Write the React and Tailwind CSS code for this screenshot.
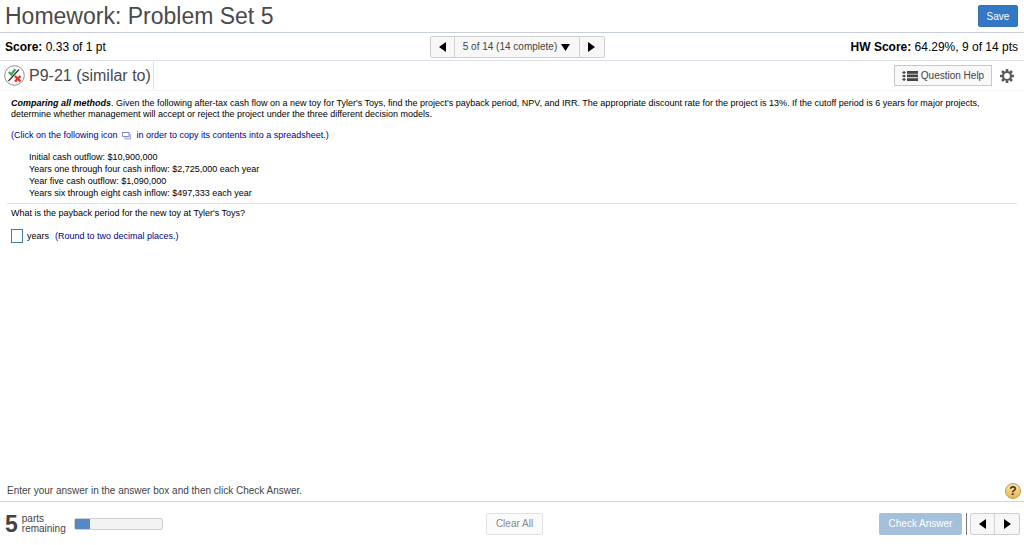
import React from "react";

function Triangle({ dir }) {
  const d = {
    left: "M8 0v10L1 5z",
    right: "M1 0v10l7-5z",
    down: "M0 2h9L4.500 9z",
  }[dir];
  return (
    <svg width="9" height="10" viewBox="0 0 9 10" fill="#000" aria-hidden="true">
      <path d={d} />
    </svg>
  );
}

function PartialCreditIcon() {
  return (
    <svg className="shrink-0" width="21" height="22" viewBox="0 0 21 22" fill="none" aria-hidden="true">
      <circle cx="10.500" cy="10.500" r="9.800" fill="#fff" stroke="#8c8c8c" />
      <path d="M4.500 16L15 4.500" stroke="#333" strokeWidth="1.300" />
      <path d="M4.800 7l2.500 2.500L11.300 4.300" stroke="#3fa65a" strokeWidth="2.400" />
      <path d="M11 11l5.500 5.500M16.500 11L11 16.500" stroke="#d9372c" strokeWidth="2.400" />
    </svg>
  );
}

function ListIcon() {
  return (
    <svg width="16" height="10" viewBox="0 0 16 10" fill="#444" aria-hidden="true">
      <path d="M0 1.500L2 0l2 1.500L2 3zM0 5l2-1.500L4 5 2 6.500zM0 8.500L2 7l2 1.500L2 10z" />
      <path d="M5 0h11v2.700H5zM5 3.600h11v2.700H5zM5 7.300h11V10H5z" />
    </svg>
  );
}

function GearIcon() {
  return (
    <svg width="14" height="14" viewBox="0 0 14 14" fill="none" stroke="#5a5a5a" aria-hidden="true">
      <circle cx="7" cy="7" r="4" strokeWidth="2.200" />
      <path
        d="M7 0v2.500M7 11.500V14M0 7h2.500M11.500 7H14M2 2l1.800 1.800M10.200 10.200L12 12M12 2l-1.800 1.800M3.800 10.200L2 12"
        strokeWidth="2.600"
      />
    </svg>
  );
}

function CopyIcon() {
  return (
    <svg width="9" height="9" viewBox="0 0 9 9" fill="none" aria-hidden="true">
      <path d="M3 3.500h5.500v4.500H3z" fill="#dde1f2" stroke="#a5aed6" />
      <path d="M.5 1.500h6.500v4h-6.500z" fill="#fff" stroke="#8490c8" />
      <path d="M0 1.500h7.500" stroke="#7a86c4" />
    </svg>
  );
}

const cashFlows = [
  "Initial cash outflow: $10,900,000",
  "Years one through four cash inflow: $2,725,000 each year",
  "Year five cash outflow: $1,090,000",
  "Years six through eight cash inflow: $497,333 each year",
];

export default function App() {
  return (
    <div className="flex min-h-screen flex-col bg-white font-['Liberation_Sans',Arial,sans-serif] text-black">
      <header className="flex h-[33px] items-center justify-between border-b border-[#c9cede] pr-1.5 pl-[5px]">
        <h1 className="text-[23px] leading-8 text-[#4a4a4a]">Homework: Problem Set 5</h1>
        <button className="h-[22px] w-10 rounded-xs border border-[#2f70b8] bg-[#3478c5] text-[10px] text-white">
          Save
        </button>
      </header>

      <div className="grid h-7 grid-cols-[1fr_auto_1fr] items-center border-b border-[#dddfe8] pr-1.5 pl-[5px] text-xs">
        <p><b>Score:</b> 0.33 of 1 pt</p>
        <nav aria-label="Question" className="ml-[11px] flex h-[22px] rounded-xs border border-[#cfcfcf] bg-[#f7f7f7] text-[10px] text-[#444]">
          <button aria-label="Previous question" className="flex w-6 items-center justify-center border-r border-[#d4d4d4]">
            <Triangle dir="left" />
          </button>
          <button className="flex w-[125px] items-center justify-center gap-1 whitespace-nowrap border-r border-[#d4d4d4]">
            5 of 14 (14 complete) <Triangle dir="down" />
          </button>
          <button aria-label="Next question" className="flex w-6 items-center justify-center">
            <Triangle dir="right" />
          </button>
        </nav>
        <p className="text-right"><b>HW Score:</b> 64.29%, 9 of 14 pts</p>
      </div>

      <div className="flex h-[30px] items-center justify-between border-b border-[#f5f5f5] pr-2.5 pl-1">
        <div className="flex h-[27px] items-center gap-1 border-r border-[#dcdcdc] pr-0.5">
          <PartialCreditIcon />
          <h2 className="text-base text-[#4a4a4a]">P9-21 (similar to)</h2>
        </div>
        <div className="flex items-center gap-2">
          <button className="flex h-[21px] w-[98px] items-center justify-center gap-[3px] whitespace-nowrap border border-[#c8c8c8] bg-[#f8f8f8] text-[10px] text-[#444]">
            <ListIcon /> Question Help
          </button>
          <button aria-label="Settings"><GearIcon /></button>
        </div>
      </div>

      <main className="flex-1 pt-[7px] pr-[7px] pl-[7px] text-[9px] leading-[11px]">
        <p className="px-1">
          <b><i>Comparing all methods</i></b>. Given the following after-tax cash flow on a new toy for Tyler's Toys,
          find the project's payback period, NPV, and IRR. The appropriate discount rate for the project is 13%. If the
          cutoff period is 6 years for major projects,{" "}
          <br className="hidden min-[1000px]:inline" />
          determine whether management will accept or reject the project under the three different decision models.
        </p>
        <p className="mt-2.5 flex items-center px-1 text-[#000080]">
          (Click on the following icon
          <button aria-label="Copy data" className="mr-1.5 ml-1"><CopyIcon /></button>
          in order to copy its contents into a spreadsheet.)
        </p>
        <ul className="mt-2.5 pl-[22px] leading-3">
          {cashFlows.map((item) => <li key={item}>{item}</li>)}
        </ul>
        <hr className="mt-1 border-[#dedede]" />
        <p className="mt-1 px-1">What is the payback period for the new toy at Tyler's Toys?</p>
        <div className="mt-2.5 flex items-center px-1">
          <input id="years" type="text" className="mr-1 h-3.5 w-3 border border-[#3c7ba4]" />
          <label htmlFor="years">years</label>
          <span className="ml-1.5 text-[#000080]">(Round to two decimal places.)</span>
        </div>
      </main>

      <div className="flex h-[22px] items-center justify-between border-b border-[#d3d4e2] pr-[3px] pl-[7px] text-[10px] text-[#444]">
        <p>Enter your answer in the answer box and then click Check Answer.</p>
        <button
          aria-label="Help"
          className="flex size-4 items-center justify-center rounded-full border border-[#b8995a] bg-linear-to-b from-[#fbe3a0] to-[#e9b84b] text-xs font-bold text-[#333]"
        >
          ?
        </button>
      </div>

      <footer className="grid h-[43px] grid-cols-[1fr_auto_1fr] items-center pr-1 pl-[5px] text-[10px]">
        <div className="flex items-center text-[#444]">
          <b className="text-[23px] leading-6">5</b>
          <p className="ml-1 leading-[10px]">parts<br />remaining</p>
          <div
            role="progressbar"
            aria-label="Parts completed"
            aria-valuenow={17}
            className="ml-2 h-3 w-[89px] overflow-hidden rounded-xs border border-[#cfcfcf] bg-[#f3f3f3]"
          >
            <div className="h-full bg-[#5588c5]" style={{ width: "17%" }} />
          </div>
        </div>
        <button className="ml-1 h-[22px] w-[57px] rounded-xs border border-[#e1e1e1] bg-[#fafafa] text-[#888]">Clear All</button>
        <div className="flex items-center justify-end">
          <button className="h-[22px] w-[83px] rounded-xs bg-[#a5c0db] text-white">Check Answer</button>
          <div className="mr-[3px] ml-1 h-[22px] border-r border-[#777]" />
          <div className="flex h-[22px] rounded-xs border border-[#cfcfcf] bg-[#f7f7f7]">
            <button aria-label="Previous part" className="flex w-6 items-center justify-center border-r border-[#d4d4d4]">
              <Triangle dir="left" />
            </button>
            <button aria-label="Next part" className="flex w-6 items-center justify-center">
              <Triangle dir="right" />
            </button>
          </div>
        </div>
      </footer>
    </div>
  );
}
